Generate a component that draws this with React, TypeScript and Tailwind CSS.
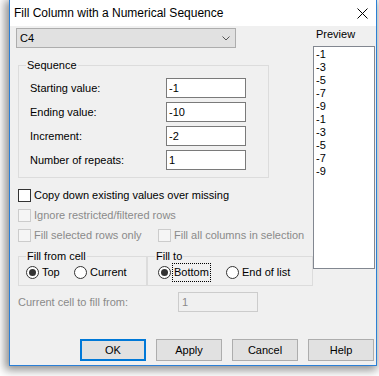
import React from 'react';

const preview = ['-1', '-3', '-5', '-7', '-9', '-1', '-3', '-5', '-7', '-9'];

const seqRows = [
    { label: 'Starting value:', value: '-1' },
    { label: 'Ending value:', value: '-10' },
    { label: 'Increment:', value: '-2' },
    { label: 'Number of repeats:', value: '1' },
];

const Check = ({ label, disabled }: { label: string; disabled?: boolean }) => (
    <div className="flex items-center h-[13px]">
        <div
            className={
                disabled
                    ? 'w-[13px] h-[13px] border border-[#cccccc] bg-[#f5f5f5]'
                    : 'w-[13px] h-[13px] border border-[#333333] bg-white'
            }
        />
        <span className={disabled ? 'ml-[3px] text-[#8a8a8a]' : 'ml-[3px] text-black'}>{label}</span>
    </div>
);

const Radio = ({ label, checked, focused }: { label: string; checked?: boolean; focused?: boolean }) => (
    <div className="flex items-center h-[13px]">
        <div className="w-[13px] h-[13px] rounded-full border border-[#333333] bg-white flex items-center justify-center">
            {checked && <div className="w-[7px] h-[7px] rounded-full bg-[#333333]" />}
        </div>
        <span className={focused ? 'ml-[2px] px-[1px] outline outline-1 outline-dotted outline-black' : 'ml-[3px]'}>
            {label}
        </span>
    </div>
);

const Group = ({ title, className, children }: { title: string; className: string; children: React.ReactNode }) => (
    <div className={'relative border border-[#dcdcdc] ' + className}>
        <span className="absolute -top-[8px] left-[7px] bg-[#f0f0f0] px-[1px] leading-[14px]">{title}</span>
        {children}
    </div>
);

const Btn = ({ label, primary }: { label: string; primary?: boolean }) => (
    <div
        className={
            primary
                ? 'w-[66px] h-[22px] border-2 border-[#0078d7] bg-[#e1e1e1] flex items-center justify-center'
                : 'w-[66px] h-[22px] border border-[#adadad] bg-[#e1e1e1] flex items-center justify-center'
        }
    >
        {label}
    </div>
);

export default function App() {
    return (
        <div className="w-[379px] h-[376px] bg-white overflow-hidden font-['Liberation_Sans',Arial,sans-serif] text-[11px] text-black">
            <div className="ml-[9px] w-[368px] h-[366px] flex flex-col border-x border-b border-[#2b7fd6] shadow-[-2px_2px_9px_2px_rgba(0,0,0,0.45)]">
                {/* title bar */}
                <div className="h-[26px] bg-white flex items-center pl-[4px] pr-[8px]">
                    <span className="text-[12px] font-['Segoe_UI','Liberation_Sans',sans-serif]">
                        Fill Column with a Numerical Sequence
                    </span>
                    <svg className="ml-auto" width="11" height="11" viewBox="0 0 11 11">
                        <path d="M0.5 0.5 L10.5 10.5 M10.5 0.5 L0.5 10.5" stroke="#000" strokeWidth="1" />
                    </svg>
                </div>

                {/* client */}
                <div className="flex-1 bg-[#f0f0f0] flex flex-col">
                    <div className="flex">
                        <div className="w-[303px] pl-[6px] flex flex-col">
                            <div className="mt-[2px] w-[220px] h-[20px] border border-[#adadad] bg-[#e1e1e1] flex items-center pl-[3px] pr-[5px]">
                                <span>C4</span>
                                <svg className="ml-auto" width="8" height="5" viewBox="0 0 8 5">
                                    <path d="M0.5 0.5 L4 4 L7.5 0.5" stroke="#555" strokeWidth="1" fill="none" />
                                </svg>
                            </div>

                            <Group title="Sequence" className="mt-[17px] ml-[2px] w-[251px] h-[113px] pt-[12px] pl-[11px]">
                                <div className="flex flex-col gap-[4px]">
                                    {seqRows.map((r) => (
                                        <div key={r.label} className="flex items-center h-[20px]">
                                            <span className="w-[136px]">{r.label}</span>
                                            <div className="w-[80px] h-[20px] border border-[#7a7a7a] bg-white flex items-center pl-[2px]">
                                                {r.value}
                                            </div>
                                        </div>
                                    ))}
                                </div>
                            </Group>

                            <div className="ml-[2px] mt-[11px] flex flex-col gap-[7px]">
                                <Check label="Copy down existing values over missing" />
                                <Check label="Ignore restricted/filtered rows" disabled />
                                <div className="flex">
                                    <div className="w-[140px]">
                                        <Check label="Fill selected rows only" disabled />
                                    </div>
                                    <Check label="Fill all columns in selection" disabled />
                                </div>
                            </div>

                            <div className="ml-[2px] mt-[14px] flex">
                                <Group title="Fill from cell" className="w-[129px] h-[30px] pt-[9px] pl-[7px]">
                                    <div className="flex">
                                        <div className="w-[48px]">
                                            <Radio label="Top" checked />
                                        </div>
                                        <Radio label="Current" />
                                    </div>
                                </Group>
                                <Group title="Fill to" className="w-[166px] h-[30px] pt-[9px] pl-[10px]">
                                    <div className="flex">
                                        <div className="w-[68px]">
                                            <Radio label="Bottom" checked focused />
                                        </div>
                                        <Radio label="End of list" />
                                    </div>
                                </Group>
                            </div>

                            <div className="ml-[2px] mt-[6px] flex items-center h-[20px]">
                                <span className="w-[160px] text-[#8a8a8a]">Current cell to fill from:</span>
                                <div className="w-[80px] h-[20px] border border-[#cccccc] bg-[#f0f0f0] flex items-center pl-[3px] text-[#8a8a8a]">
                                    1
                                </div>
                            </div>
                        </div>

                        <div className="w-[62px] flex flex-col">
                            <span className="mt-[1px] ml-[3px] leading-[14px]">Preview</span>
                            <div className="mt-[5px] h-[223px] border border-[#828790] bg-white pt-[1px] pl-[2px] flex flex-col">
                                {preview.map((v, i) => (
                                    <span key={i} className="leading-[13px]">{v}</span>
                                ))}
                            </div>
                        </div>
                    </div>

                    <div className="mt-auto mb-[4px] pr-[2px] flex justify-end gap-[10px]">
                        <Btn label="OK" primary />
                        <Btn label="Apply" />
                        <Btn label="Cancel" />
                        <Btn label="Help" />
                    </div>
                </div>
            </div>
        </div>
    );
}
